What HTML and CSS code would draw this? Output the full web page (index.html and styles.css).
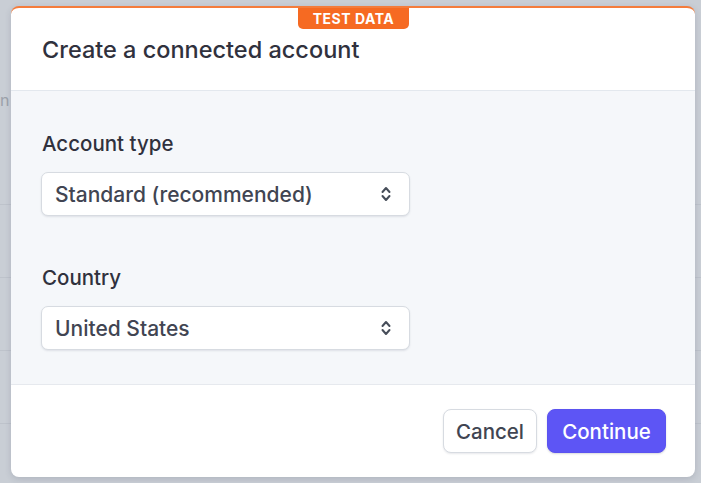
FILE: index.html
```html
<!DOCTYPE html>
<html>
<head>
<meta charset="utf-8">
<link rel="stylesheet" href="styles.css">
</head>
<body>
<div class="backdrop">
  <div class="bg-page">
    <div class="bg-row bg-row-text"><span>n</span></div>
    <div class="bg-row"></div>
    <div class="bg-row"></div>
    <div class="bg-row"></div>
    <div class="bg-row"></div>
  </div>
  <div class="modal">
    <div class="badge">TEST DATA</div>
    <div class="modal-header">
      <h1 class="title">Create a connected account</h1>
    </div>
    <div class="modal-body">
      <div class="field">
        <label class="label">Account type</label>
        <div class="select">
          <span class="select-value">Standard (recommended)</span>
          <svg class="chev" width="12" height="18" viewBox="0 0 12 18"><path d="M2.5 7 L6 3 L9.5 7 M2.5 11 L6 15 L9.5 11" fill="none" stroke="#474e5a" stroke-width="2" stroke-linecap="round" stroke-linejoin="round"/></svg>
        </div>
      </div>
      <div class="field">
        <label class="label">Country</label>
        <div class="select">
          <span class="select-value">United States</span>
          <svg class="chev" width="12" height="18" viewBox="0 0 12 18"><path d="M2.5 7 L6 3 L9.5 7 M2.5 11 L6 15 L9.5 11" fill="none" stroke="#474e5a" stroke-width="2" stroke-linecap="round" stroke-linejoin="round"/></svg>
        </div>
      </div>
    </div>
    <div class="modal-footer">
      <button class="btn btn-secondary">Cancel</button>
      <button class="btn btn-primary">Continue</button>
    </div>
  </div>
</div>
</body>
</html>
```
FILE: styles.css
```css
* { box-sizing: border-box; }
html, body { margin: 0; padding: 0; }
body {
  width: 701px;
  height: 483px;
  overflow: hidden;
  background: #c9ced5;
  font-family: Inter, "Noto Sans", "Liberation Sans", sans-serif;
}
.backdrop {
  position: relative;
  width: 701px;
  height: 483px;
}
.bg-page {
  display: flex;
  flex-direction: column;
  padding-top: 92px;
}
.bg-row {
  height: 73px;
  border-bottom: 1px solid #bec3cb;
}
.bg-row-text {
  height: 113px;
  color: #9ca1aa;
  font-size: 16px;
  line-height: 16px;
}
.modal {
  position: absolute;
  left: 11px;
  top: 6px;
  width: 684px;
  height: 471px;
  background: #fff;
  border-radius: 8px;
  border-top: 2px solid #f47c3c;
  overflow: hidden;
  display: flex;
  flex-direction: column;
  box-shadow: 0 2px 6px rgba(60, 66, 87, 0.18);
}
.badge {
  position: absolute;
  left: 287px;
  top: 0;
  width: 111px;
  height: 21px;
  background: #f66a22;
  color: #fff;
  font-size: 14px;
  font-weight: 700;
  letter-spacing: 0.5px;
  display: flex;
  align-items: center;
  justify-content: center;
  border-radius: 0 0 5px 5px;
}
.modal-header {
  height: 83px;
  padding: 27px 31px 0;
  border-bottom: 1px solid #e3e8ee;
}
.title {
  margin: 0;
  font-size: 23.5px;
  font-weight: 500;
  color: #30313d;
  line-height: 30px;
}
.modal-body {
  background: #f5f7fa;
  height: 294px;
  padding: 40px 30px 0;
  display: flex;
  flex-direction: column;
  gap: 49px;
  border-bottom: 1px solid #e6e9ee;
}
.field {
  display: flex;
  flex-direction: column;
  gap: 15px;
}
.label {
  font-size: 20.5px;
  font-weight: 500;
  color: #30313d;
  line-height: 26px;
  padding-left: 1px;
}
.select {
  width: 369px;
  height: 44px;
  background: #fff;
  border: 1px solid #d7dbe1;
  border-radius: 7px;
  box-shadow: 0 1px 2px rgba(60, 66, 87, 0.12);
  display: flex;
  align-items: center;
  justify-content: space-between;
  padding: 0 17px 0 13px;
}
.select-value {
  font-size: 21px;
  font-weight: 500;
  color: #414552;
}
.chev { display: block; }
.modal-footer {
  flex: 1;
  display: flex;
  justify-content: flex-end;
  align-items: flex-start;
  gap: 10px;
  padding: 24px 29px 0;
}
.btn {
  height: 44px;
  border-radius: 8px;
  font-family: inherit;
  font-size: 20.5px;
  font-weight: 500;
  padding: 0;
  cursor: pointer;
}
.btn-secondary {
  width: 94px;
  background: #fff;
  color: #414552;
  border: 1px solid #d7dbe1;
  box-shadow: 0 1px 2px rgba(60, 66, 87, 0.12);
}
.btn-primary {
  width: 119px;
  background: #5d55f5;
  color: #fff;
  border: 1px solid #5b53f0;
  box-shadow: 0 1px 2px rgba(60, 66, 87, 0.2);
}
```
